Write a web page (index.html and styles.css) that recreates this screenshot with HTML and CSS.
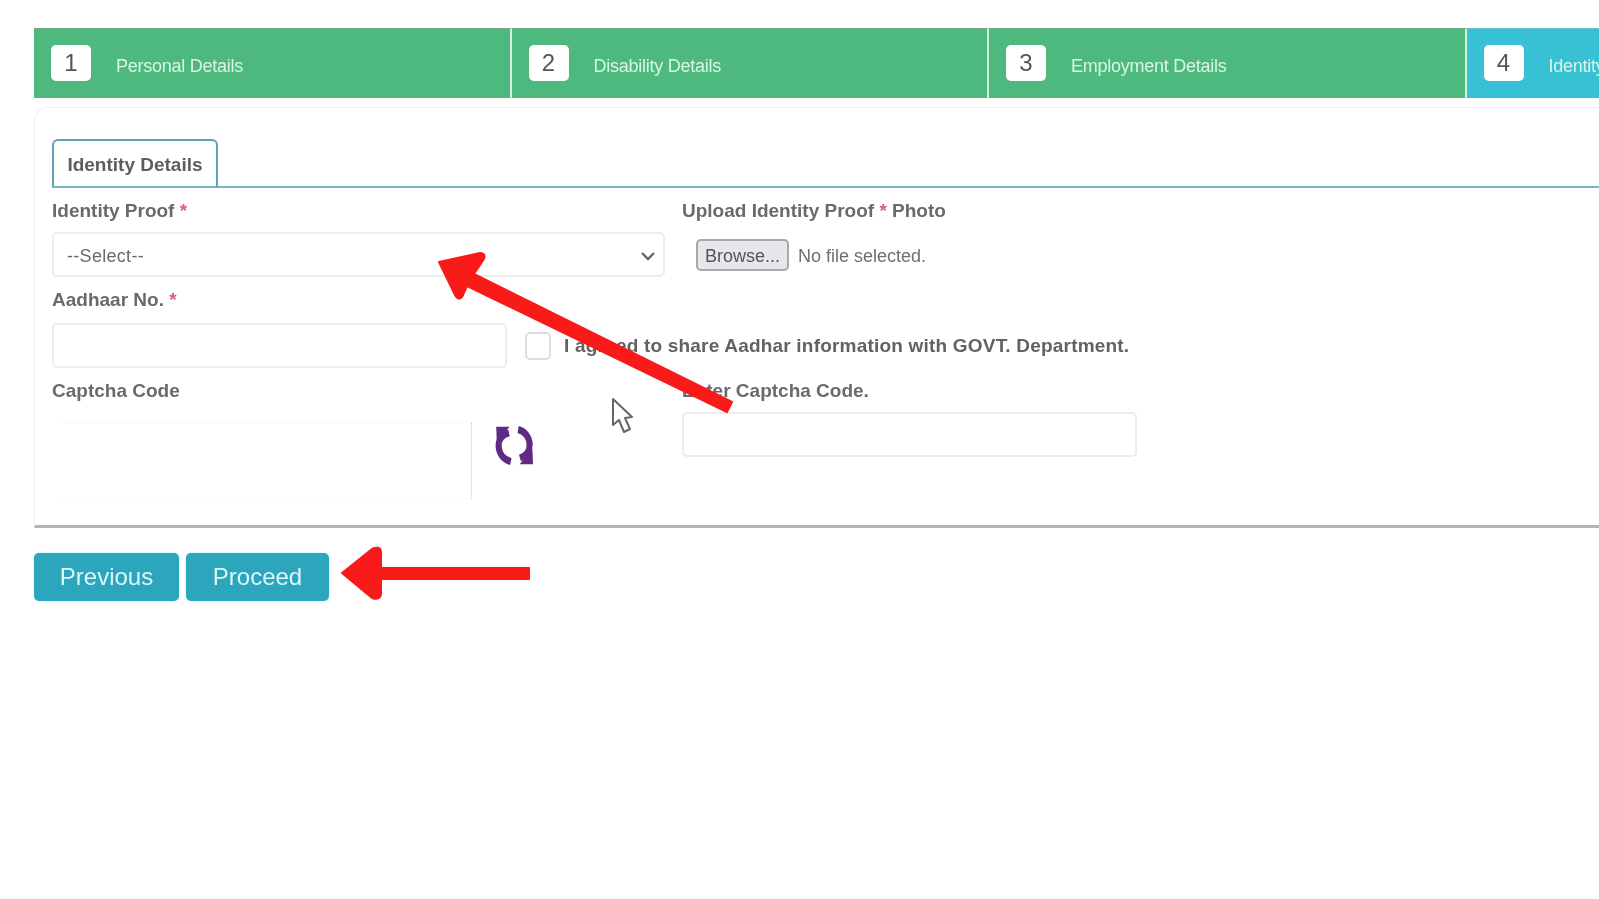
FILE: index.html
```html
<!DOCTYPE html>
<html lang="en">
<head>
<meta charset="utf-8">
<title>Identity Details</title>
<link rel="stylesheet" href="styles.css">
</head>
<body>
<div class="page">
  <div class="steps">
    <div class="step"><span class="num">1</span><span class="step-name">Personal Details</span></div>
    <div class="step"><span class="num">2</span><span class="step-name">Disability Details</span></div>
    <div class="step"><span class="num">3</span><span class="step-name">Employment Details</span></div>
    <div class="step step-active"><span class="num">4</span><span class="step-name">Identity Details</span></div>
  </div>

  <div class="card">
    <div class="tabs"><div class="tab">Identity Details</div></div>
    <div class="form">
      <div class="row">
        <div class="col">
          <label class="label">Identity Proof<span class="req"> *</span></label>
          <div class="select-wrap">
            <select class="control select"><option>--Select--</option></select>
            <svg class="chevron" viewBox="0 0 16 10" width="16" height="10"><path d="M2 2l6 6 6-6" fill="none" stroke="#666" stroke-width="2.4"/></svg>
          </div>
        </div>
        <div class="col">
          <label class="label">Upload Identity Proof<span class="req"> *</span> Photo</label>
          <div class="file-row">
            <button class="browse" type="button">Browse...</button>
            <span class="file-name">No file selected.</span>
          </div>
        </div>
      </div>

      <div class="row row-aadhaar">
        <div class="aadhaar-col">
          <label class="label">Aadhaar No.<span class="req"> *</span></label>
          <input class="control aadhaar" type="text">
        </div>
        <div class="agree">
          <span class="check"></span>
          <span class="agree-text">I agreed to share Aadhar information with GOVT. Department.</span>
        </div>
      </div>

      <div class="row row-captcha">
        <div class="col">
          <label class="label">Captcha Code</label>
          <div class="captcha-row">
            <div class="captcha-img"></div>
            <svg class="refresh" viewBox="40 50 125 112" width="38" height="39" preserveAspectRatio="none">
              <g fill="#5f2a85">
                <path d="M86 70C62 76 50 92 52 110 54 130 68 146 92 152" fill="none" stroke="#5f2a85" stroke-width="20"/>
                <path d="M44 52h44L46 96z"/>
                <path d="M116 60C138 64 154 84 154 104 154 122 146 134 122 142" fill="none" stroke="#5f2a85" stroke-width="20"/>
                <path d="M165 160h-44l42-44z"/>
              </g>
            </svg>
          </div>
        </div>
        <div class="col">
          <label class="label label-tight">Enter Captcha Code.</label>
          <input class="control captcha-input" type="text">
        </div>
      </div>
    </div>
  </div>

  <div class="actions">
    <button class="btn btn-prev" type="button">Previous</button>
    <button class="btn btn-next" type="button">Proceed</button>
  </div>
</div>

<svg class="overlay" viewBox="0 0 1599 899" width="1599" height="899">
  <path class="arrow" d="M439 262 L480 253 Q486 253 484 259 L474 274 L732 402 L727 412 L467 286 L462 297 Q458 301 455 295 Z"/>
  <path class="arrow" d="M342 573 L372 549 Q381 545 381 553 V568 H529 V579 H381 V593 Q381 601 372 598 Z"/>
  <path class="cursor" d="M613 399 V425 L619 420 L624 432 L630 429 L625 418 L632 417 Z"/>
</svg>
</body>
</html>
```

FILE: styles.css
```css
* { box-sizing: border-box; }
html, body { margin: 0; height: 100%; background: #fff; overflow: hidden; }
body { font-family: "Liberation Sans", Arial, sans-serif; }

.page { width: 1599px; height: 899px; padding: 28px 0 0 34px; overflow: hidden; filter: blur(0.6px); }

.steps { display: flex; width: 1920px; height: 70px; }
.step { flex: 0 0 477.5px; display: flex; align-items: center; background: #4db97f; border-right: 2px solid #d6efe1; border-top: 1px solid #6fa98a; padding-left: 17px; }
.step-active { background: #38c1d4; border-right: 0; border-top-color: #72c0cc; }
.num { width: 40px; height: 36px; margin-top: -1px; background: #fff; border-radius: 5px; color: #555; font-size: 24px; display: flex; align-items: center; justify-content: center; }
.step-name { margin-left: 25px; padding-top: 6px; color: #d9f5e6; font-size: 18px; letter-spacing: -0.25px; }

.card { margin-top: 9px; margin-right: -20px; height: 421px; padding: 31px 18px 0 17px; background: #fff; border: 1px solid #f0f0f0; border-bottom: 3px solid #b4b4b4; border-top-left-radius: 14px; }

.tabs { border-bottom: 2px solid #79b3c2; height: 49px; }
.tab { width: 166px; height: 48px; padding-top: 13px; text-align: center; border: 2px solid #5f9fb8; border-bottom: 0; border-radius: 6px 6px 0 0; color: #5e5e5e; font-size: 19px; font-weight: 700; }

.form { padding-top: 10px; }
.row { display: grid; grid-template-columns: 630px 1fr; }
.col { min-width: 0; }
.label { display: block; height: 24px; line-height: 26px; margin-bottom: 10px; color: #6a6a6a; font-size: 19px; font-weight: 700; }
.req { color: #d9617a; }

.control { display: block; height: 45px; background: #fff; border: 2px solid #ececec; border-radius: 5px; color: #6b6b6b; font: 18px "Liberation Sans", Arial, sans-serif; outline: 0; }
.select-wrap { position: relative; width: 613px; }
.select { width: 100%; padding: 3px 0 0 13px; letter-spacing: 0.3px; appearance: none; }
.chevron { position: absolute; right: 9px; top: 19px; }

.file-row { display: flex; align-items: center; height: 45px; padding-left: 14px; }
.browse { width: 93px; height: 32px; padding: 4px 0 0; background: #e6e7ea; border: 2px solid #a5a8ad; border-radius: 5px; color: #555; font: 18px "Liberation Sans", Arial, sans-serif; }
.file-name { margin: 4px 0 0 9px; color: #6f6f6f; font-size: 18px; }

.row-aadhaar { margin-top: 10px; display: flex; }
.aadhaar-col { width: 455px; }
.aadhaar { width: 455px; margin-top: 12px; }
.agree { display: flex; align-items: center; height: 45px; margin-top: 36px; margin-left: 18px; }
.check { width: 26px; height: 28px; border: 2px solid #dcdcdc; border-radius: 5px; }
.agree-text { margin-left: 13px; color: #626262; font-size: 19px; font-weight: 700; letter-spacing: 0.2px; }

.row-captcha { margin-top: 10px; }
.row-captcha .label { margin-bottom: 11px; }
.row-captcha .label-tight { margin-bottom: 10px; }
.captcha-row { display: flex; padding: 9px 0 0 6px; }
.captcha-img { width: 414px; height: 78px; border: 1px dotted #f3f3f3; border-left-color: #fff; border-right-color: #c8c8c8; }
.refresh { margin: 4px 0 0 23px; }
.captcha-input { width: 455px; }

.actions { display: flex; gap: 7px; margin-top: 25px; }
.btn { height: 48px; padding: 0; border: 0; border-radius: 5px; background: #2ba6bd; color: #dff6fa; font: 24px "Liberation Sans", Arial, sans-serif; box-shadow: 0 0 3px #bfeef5; }
.btn-prev { width: 145px; }
.btn-next { width: 143px; }

.overlay { position: absolute; left: 0; top: 0; pointer-events: none; filter: blur(0.4px); }
.arrow { fill: #f91a1a; stroke: #f91a1a; stroke-width: 2; stroke-linejoin: round; }
.cursor { fill: #fff; stroke: #666; stroke-width: 2; stroke-linejoin: round; }
```
